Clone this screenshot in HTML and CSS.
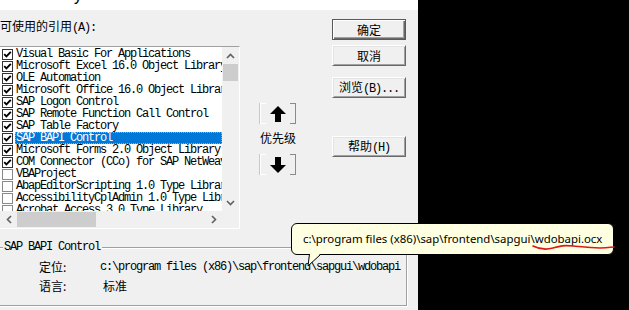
FILE: index.html
```html
<!DOCTYPE html>
<html lang="zh-CN">
<head>
<meta charset="utf-8">
<title>引用 - VBAProject</title>
<link rel="stylesheet" href="styles.css">
</head>
<body>
<div class="screen">
  <div class="window">
    <div class="titlebar"><span>y</span></div>
    <div class="top">
      <div class="col-list">
        <div class="label">可使用的引用<span class="mono">(A):</span></div>
        <div class="list">
          <div class="items">
            <div class="row"><svg class="cb on" viewBox="0 0 11 11"><rect x="0.5" y="0.5" width="10" height="10"/><path d="M2.2 5.2l2.2 2.2 4.4-4.6"/></svg><span class="text">Visual Basic For Applications</span></div>
            <div class="row"><svg class="cb on" viewBox="0 0 11 11"><rect x="0.5" y="0.5" width="10" height="10"/><path d="M2.2 5.2l2.2 2.2 4.4-4.6"/></svg><span class="text">Microsoft Excel 16.0 Object Library</span></div>
            <div class="row"><svg class="cb on" viewBox="0 0 11 11"><rect x="0.5" y="0.5" width="10" height="10"/><path d="M2.2 5.2l2.2 2.2 4.4-4.6"/></svg><span class="text">OLE Automation</span></div>
            <div class="row"><svg class="cb on" viewBox="0 0 11 11"><rect x="0.5" y="0.5" width="10" height="10"/><path d="M2.2 5.2l2.2 2.2 4.4-4.6"/></svg><span class="text">Microsoft Office 16.0 Object Library</span></div>
            <div class="row"><svg class="cb on" viewBox="0 0 11 11"><rect x="0.5" y="0.5" width="10" height="10"/><path d="M2.2 5.2l2.2 2.2 4.4-4.6"/></svg><span class="text">SAP Logon Control</span></div>
            <div class="row"><svg class="cb on" viewBox="0 0 11 11"><rect x="0.5" y="0.5" width="10" height="10"/><path d="M2.2 5.2l2.2 2.2 4.4-4.6"/></svg><span class="text">SAP Remote Function Call Control</span></div>
            <div class="row"><svg class="cb on" viewBox="0 0 11 11"><rect x="0.5" y="0.5" width="10" height="10"/><path d="M2.2 5.2l2.2 2.2 4.4-4.6"/></svg><span class="text">SAP Table Factory</span></div>
            <div class="row sel"><svg class="cb on" viewBox="0 0 11 11"><rect x="0.5" y="0.5" width="10" height="10"/><path d="M2.2 5.2l2.2 2.2 4.4-4.6"/></svg><span class="text">SAP BAPI Control</span></div>
            <div class="row"><svg class="cb on" viewBox="0 0 11 11"><rect x="0.5" y="0.5" width="10" height="10"/><path d="M2.2 5.2l2.2 2.2 4.4-4.6"/></svg><span class="text">Microsoft Forms 2.0 Object Library</span></div>
            <div class="row"><svg class="cb on" viewBox="0 0 11 11"><rect x="0.5" y="0.5" width="10" height="10"/><path d="M2.2 5.2l2.2 2.2 4.4-4.6"/></svg><span class="text">COM Connector (CCo) for SAP NetWeaver</span></div>
            <div class="row"><svg class="cb" viewBox="0 0 11 11"><rect x="0.5" y="0.5" width="10" height="10"/></svg><span class="text">VBAProject</span></div>
            <div class="row"><svg class="cb" viewBox="0 0 11 11"><rect x="0.5" y="0.5" width="10" height="10"/></svg><span class="text">AbapEditorScripting 1.0 Type Library</span></div>
            <div class="row"><svg class="cb" viewBox="0 0 11 11"><rect x="0.5" y="0.5" width="10" height="10"/></svg><span class="text">AccessibilityCplAdmin 1.0 Type Library</span></div>
            <div class="row"><svg class="cb" viewBox="0 0 11 11"><rect x="0.5" y="0.5" width="10" height="10"/></svg><span class="text">Acrobat Access 3.0 Type Library</span></div>
          </div>
          <div class="vscroll">
            <div class="sb-btn"><svg width="9" height="6" viewBox="0 0 9 6"><path d="M1 5l3.5-3.5L8 5"/></svg></div>
            <div class="vthumb"></div>
            <div class="track"></div>
            <div class="sb-btn"><svg width="9" height="6" viewBox="0 0 9 6"><path d="M1 1l3.5 3.5L8 1"/></svg></div>
          </div>
          <div class="hscroll">
            <div class="sb-btn"><svg width="6" height="9" viewBox="0 0 6 9"><path d="M5 1L1.5 4.5 5 8"/></svg></div>
            <div class="hthumb"></div>
            <div class="track"></div>
            <div class="sb-btn"><svg width="6" height="9" viewBox="0 0 6 9"><path d="M1 1l3.5 3.5L1 8"/></svg></div>
          </div>
          <div class="corner"></div>
        </div>
      </div>
      <div class="col-prio">
        <button class="arrow-btn" type="button"><svg width="16" height="16" viewBox="0 0 16 16"><polygon points="8,0 16,8 11,8 11,16 5,16 5,8 0,8"/></svg></button>
        <div class="prio-label">优先级</div>
        <button class="arrow-btn" type="button"><svg width="16" height="16" viewBox="0 0 16 16"><polygon points="5,0 11,0 11,8 16,8 8,16 0,8 5,8"/></svg></button>
      </div>
      <div class="col-buttons">
        <button class="btn default" type="button">确定</button>
        <button class="btn gap-s" type="button">取消</button>
        <button class="btn gap-m" type="button">浏览<span class="mono">(B)...</span></button>
        <button class="btn gap-l" type="button">帮助<span class="mono">(H)</span></button>
      </div>
    </div>
    <div class="group">
      <div class="group-title mono">SAP BAPI Control</div>
      <div class="group-grid">
        <span class="key">定位:</span><span class="mono">c:\program files (x86)\sap\frontend\sapgui\wdobapi</span>
        <span class="key">语言:</span><span class="lang">标准</span>
      </div>
    </div>
  </div>
  <div class="tooltip">c:\program files (x86)\sap\frontend\sapgui\wdobapi.ocx<svg class="tail" width="16" height="14" viewBox="0 0 16 14"><polygon points="2.5,-1.5 14.5,-1.5 1,12"/><polyline points="2.5,0 1,12 13.5,0.5"/></svg></div>
  <svg class="scribble" width="88" height="10" viewBox="0 0 88 10"><path d="M3 4 C 9 7, 16 8, 23 6 S 33 3, 43 4 S 60 6, 70 6 S 80 5, 84 5"/></svg>
</div>
</body>
</html>
```

FILE: styles.css
```css
* { box-sizing: border-box; }
html, body { margin: 0; padding: 0; }
body {
  background: #000;
  width: 629px;
  height: 310px;
  overflow: hidden;
  font-family: "Noto Sans CJK SC", "Noto Sans", sans-serif;
  font-size: 12px;
  color: #000;
}
.screen { position: relative; width: 629px; height: 310px; overflow: hidden; }
.window {
  width: 418px;
  height: 310px;
  background: #f0f0f0;
  display: flex;
  flex-direction: column;
}
.titlebar {
  height: 10px;
  background: #fff;
  overflow: hidden;
  padding-left: 74px;
  flex: none;
}
.titlebar span {
  display: block;
  font: 16px/16px "Liberation Sans", sans-serif;
  margin-top: -12px;
}
.mono {
  font-family: "Liberation Mono", "Courier New", Cousine, monospace;
  font-size: 12px;
  letter-spacing: -1.2px;
}
.top { display: flex; align-items: flex-start; flex: none; }
.col-list { width: 240px; display: flex; flex-direction: column; }
.label {
  height: 14px;
  line-height: 14px;
  margin-top: 9px;
  margin-bottom: 13px;
  white-space: nowrap;
}
.list {
  height: 183px;
  border-top: 1px solid #a0a0a0;
  border-right: 1px solid #fff;
  border-bottom: 1px solid #fff;
  display: grid;
  grid-template-columns: 222px 17px;
  grid-template-rows: 164px 17px;
}
.items {
  background: #fff;
  overflow: hidden;
  padding: 1px 0 0 2px;
}
.row {
  height: 12px;
  display: flex;
  align-items: center;
  white-space: nowrap;
}
.cb { width: 11px; height: 11px; flex: none; margin-right: 2px; }
.cb rect { fill: #fff; stroke: #8a8a8a; }
.cb.on rect { stroke: #333; }
.cb path { fill: none; stroke: #000; stroke-width: 1.9; }
.row .text {
  flex: 1;
  min-width: 0;
  height: 12px;
  line-height: 12px;
  padding-left: 1px;
  overflow: hidden;
  font-family: "Liberation Mono", "Courier New", Cousine, monospace;
  font-size: 12px;
  letter-spacing: -1.2px;
}
.row.sel .text {
  background: #0078d7;
  color: #fff;
  outline: 1px dotted #e89a3c;
  outline-offset: -1px;
}
.vscroll { background: #f0f0f0; display: flex; flex-direction: column; }
.hscroll { background: #f0f0f0; display: flex; }
.corner { background: #f0f0f0; }
.sb-btn {
  width: 17px;
  height: 17px;
  flex: none;
  display: flex;
  align-items: center;
  justify-content: center;
}
.sb-btn path { fill: none; stroke: #606060; stroke-width: 1.6; }
.track { flex: 1; }
.vthumb { width: 15px; height: 17px; margin-left: 1px; background: #cdcdcd; flex: none; }
.hthumb { width: 79px; height: 15px; margin-top: 1px; background: #cdcdcd; flex: none; }

.col-prio {
  margin-left: 20px;
  width: 36px;
  padding-top: 93px;
  display: flex;
  flex-direction: column;
  align-items: center;
}
.arrow-btn {
  position: relative;
  width: 36px;
  height: 21px;
  padding: 0;
  border: 0;
  background: transparent;
  display: flex;
  align-items: center;
  justify-content: center;
  flex: none;
}
.arrow-btn::before,
.arrow-btn::after {
  content: "";
  position: absolute;
  top: 0;
  bottom: 0;
  width: 5px;
}
.arrow-btn::before {
  left: 0;
  border: 1px solid #fff;
  border-right: 0;
  box-shadow: -1px 0 0 #c8c8c8;
}
.arrow-btn::after {
  right: 0;
  border: 1px solid #8a8a8a;
  border-left: 0;
}
.arrow-btn polygon { fill: #000; }
.prio-label { height: 14px; line-height: 14px; margin-top: 7px; margin-bottom: 9px; }

.col-buttons {
  margin-left: 36px;
  padding-top: 9px;
  display: flex;
  flex-direction: column;
}
.btn {
  width: 74px;
  height: 21px;
  padding: 0;
  font: inherit;
  line-height: 17px;
  color: #000;
  background: #f0f0f0;
  border: 1px solid;
  border-color: #fff #696969 #696969 #fff;
  box-shadow: inset 1px 1px 0 #e3e3e3, inset -1px -1px 0 #a0a0a0;
}
.btn.default {
  border: 1px solid #5a5a5a;
  box-shadow: inset 1px 1px 0 #fff, inset -1px -1px 0 #696969, inset -2px -2px 0 #a0a0a0;
}
.gap-s { margin-top: 5px; }
.gap-m { margin-top: 11px; }
.gap-l { margin-top: 38px; }

.group {
  position: relative;
  margin-left: -5px;
  margin-top: 18px;
  width: 412px;
  height: 59px;
  border: 1px solid #a0a0a0;
  box-shadow: 1px 1px 0 #fff, inset 1px 1px 0 #fff;
  flex: none;
}
.group-title {
  position: absolute;
  top: -7px;
  left: 7px;
  padding: 0 2px 0 1px;
  line-height: 12px;
  background: #f0f0f0;
}
.group-grid {
  display: grid;
  grid-template-columns: 61px auto;
  row-gap: 5px;
  padding: 12px 0 0 43px;
  line-height: 14px;
}
.key { white-space: nowrap; }
.lang { padding-left: 3px; }

.tooltip {
  position: absolute;
  left: 291px;
  top: 223px;
  width: 323px;
  height: 32px;
  background: #ffffe1;
  border: 1px solid #000;
  border-radius: 6px;
  padding-left: 11px;
  font: 11.4px/30px "Noto Sans", sans-serif;
  white-space: nowrap;
}
.tail {
  position: absolute;
  left: 15px;
  top: 30px;
  overflow: visible;
}
.tail polygon { fill: #ffffe1; }
.tail polyline { fill: none; stroke: #000; stroke-width: 1; }
.scribble {
  position: absolute;
  left: 530px;
  top: 242px;
}
.scribble path { fill: none; stroke: #e3171a; stroke-width: 1.6; stroke-linecap: round; }
```
